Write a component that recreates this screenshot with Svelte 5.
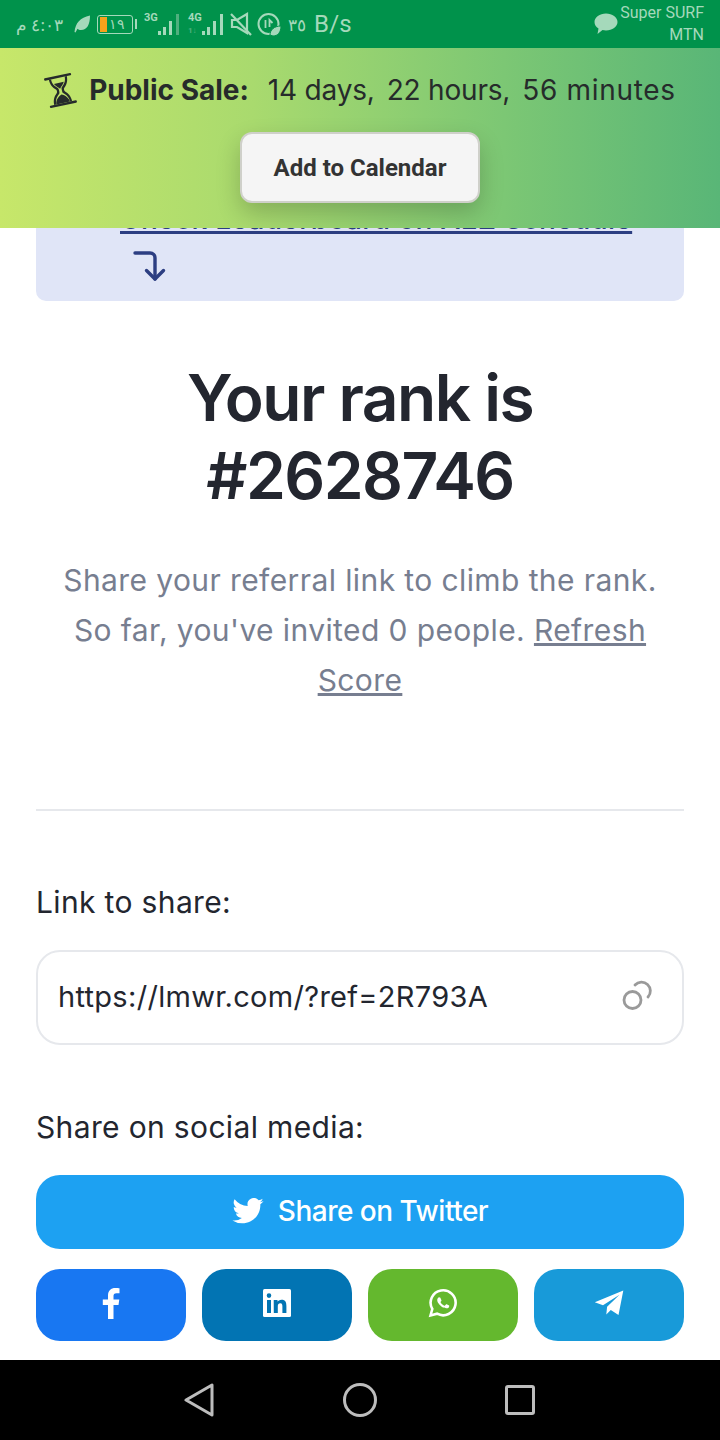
<script>
  const counters = ["14 days,", "22 hours,", "56 minutes"];
</script>

<div class="phone">
  <header class="status">
    <div class="status-left">
      <span class="clock">٤:٠٣ م</span>
      <svg class="leaf" width="16" height="18" viewBox="0 0 16 18"><path d="M0.500 17C1.500 8 6 2.500 16 .5c0 9-3 14.500-9 14.500-1.500 0-2.700-.4-3.500-1.200L1.500 17.500z" fill="#a5d9bb"/></svg>
      <div class="battery">
        <div class="battery-body"><span class="battery-fill"></span><span class="battery-num">١٩</span></div>
        <span class="battery-tip"></span>
      </div>
      <div class="signal sig3g">
        <span class="net">3G</span>
        <svg width="23" height="22" viewBox="0 0 23 22"><g fill="#a5d9bb"><rect x="1" y="18" width="3" height="4"/><rect x="6" y="14" width="3" height="8"/><rect x="12" y="8" width="3" height="14"/></g><rect x="19" y="1" width="3" height="21" fill="#4fb07e"/></svg>
      </div>
      <div class="signal sig4g">
        <span class="net">4G<small>1↓</small></span>
        <svg width="23" height="22" viewBox="0 0 23 22"><g fill="#a5d9bb"><rect x="1" y="18" width="3" height="4"/><rect x="6" y="14" width="3" height="8"/><rect x="12" y="8" width="3" height="14"/><rect x="19" y="1" width="3" height="21"/></g></svg>
      </div>
      <svg class="mute" width="24" height="24" viewBox="0 0 24 24" fill="none" stroke="#a5d9bb" stroke-width="2.200"><path d="M3 8h5l10-6v19l-10-6H3z"/><path d="M2 2l20 21"/></svg>
      <svg class="data" width="24" height="24" viewBox="0 0 24 24" fill="none"><circle cx="11.500" cy="12" r="10" stroke="#a5d9bb" stroke-width="2"/><path d="M8.500 8v8M12.500 15V8l3 3" stroke="#a5d9bb" stroke-width="1.800"/><path d="M13 23c0-5 4-9 11-9 0 6-3 10-8 10z" fill="#a5d9bb" stroke="#00924b" stroke-width="1"/></svg>
      <span class="speed-num">٣٥</span>
      <span class="speed">B/s</span>
    </div>
    <div class="status-right">
      <svg class="bubble" width="24" height="22" viewBox="0 0 24 22"><path d="M12 .5c6.300 0 11.500 3.700 11.500 8.500S18.300 17.500 12 17.500c-1.200 0-2.400-.1-3.500-.4L3.500 21l1-5.400C2 14 .5 11.700.5 9 .5 4.200 5.700.5 12 .5z" fill="#a5d9bb"/></svg>
      <div class="carrier"><span>Super SURF</span><span>MTN</span></div>
    </div>
  </header>

  <section class="banner">
    <div class="countdown">
      <svg class="hourglass" width="33" height="35" viewBox="0 0 36 38">
        <g transform="rotate(-12 18 19)" fill="#262b2b">
          <rect x="3" y="2.500" width="30" height="2.600" rx="1"/>
          <rect x="3" y="32.900" width="30" height="2.600" rx="1"/>
          <path d="M8 5h2.400c0 5 2 7.600 5 10.300.9.800 1.100 1.300 1.100 3.700s-.2 2.900-1.100 3.700c-3 2.700-5 5.300-5 10.300H8c0-6 2.400-9.300 5.300-12 .6-.6.700-1 .7-2s-.1-1.400-.7-2C10.400 14.300 8 11 8 5zM28 5h-2.400c0 5-2 7.600-5 10.300-.9.800-1.100 1.300-1.100 3.700s.2 2.900 1.100 3.700c3 2.700 5 5.300 5 10.300H28c0-6-2.400-9.300-5.300-12-.6-.6-.7-1-.7-2s.1-1.400.7-2C25.600 14.300 28 11 28 5z"/>
          <path d="M12.500 10.500h11C22 13.500 19.500 15 18 17c-1.500-2-4-3.500-5.500-6.500zM10.500 33c0-4 3.500-8 7.500-9.500 4 1.500 7.500 5.500 7.500 9.500z"/>
        </g>
      </svg>
      <strong>Public Sale:</strong>
      {#each counters as c}
        <span>{c}</span>
      {/each}
    </div>
    <button class="calendar">Add to Calendar</button>
  </section>

  <main class="page">
    <div class="notice">
      <a href="#leaderboard" class="notice-link">Check Leaderboard on AEZ Schedule</a>
      <svg class="notice-arrow" width="36" height="36" viewBox="0 0 36 36" fill="none" stroke="#2c3e82" stroke-width="3.400" stroke-linecap="round" stroke-linejoin="round"><path d="M3 3h15c3 0 5 2 5 5v21"/><path d="M14.500 20.500l8.500 8.500 8.500-8.500"/></svg>
    </div>

    <h1>Your rank is<br>#2628746</h1>
    <p class="sub">Share your referral link to climb the rank. So far, you've invited 0 people. <a href="#refresh">Refresh Score</a></p>

    <hr />

    <div class="label first">Link to share:</div>
    <div class="link-box">
      <span>https://lmwr.com/?ref=2R793A</span>
      <svg width="34" height="34" viewBox="0 0 34 34" fill="none" stroke="#9a9a9a" stroke-width="2.800"><circle cx="13.500" cy="20" r="8.500"/><path d="M16 5a8.500 8.500 0 1 1 13 12" stroke-linecap="round"/></svg>
    </div>

    <div class="label">Share on social media:</div>
    <a class="btn twitter" href="#twitter">
      <svg width="32" height="26" viewBox="0 0 24 20"><path fill="#fff" d="M24 2.400a9.800 9.800 0 0 1-2.800.8A4.900 4.900 0 0 0 23.300.5a9.800 9.800 0 0 1-3.100 1.200 4.900 4.900 0 0 0-8.400 4.500A14 14 0 0 1 1.700.9a4.900 4.900 0 0 0 1.500 6.600 4.900 4.900 0 0 1-2.200-.6v.1a4.900 4.900 0 0 0 3.900 4.800 4.900 4.900 0 0 1-2.200.1 4.900 4.900 0 0 0 4.600 3.400A9.900 9.900 0 0 1 0 17.300a14 14 0 0 0 7.500 2.200c9.100 0 14-7.500 14-14v-.6A10 10 0 0 0 24 2.400z"/></svg>
      Share on Twitter
    </a>
    <div class="socials">
      <a class="btn fb" href="#facebook" aria-label="Facebook">
        <svg width="18" height="32" viewBox="0 0 18 32"><path fill="#fff" d="M11.500 32V18h5l.8-5.600h-5.800V9c0-1.700.7-2.800 3-2.800h3V1.300C16.900 1.200 15.200 1 13.300 1 9 1 6 3.600 6 8.400v4H.8V18H6v14z"/></svg>
      </a>
      <a class="btn li" href="#linkedin" aria-label="LinkedIn">
        <svg width="28" height="28" viewBox="0 0 28 28"><rect width="28" height="28" rx="1.500" fill="#fff"/><path fill="#0274b3" d="M4 11h4v13H4zM6 4.300a2.300 2.300 0 1 1 0 4.600 2.300 2.300 0 0 1 0-4.600zM10.700 11h3.800v1.800c.6-1.100 2-2.100 4-2.100 4.100 0 4.900 2.700 4.900 6.200V24h-4v-6.300c0-1.500 0-3.400-2.100-3.400s-2.500 1.600-2.500 3.300V24h-4z"/></svg>
      </a>
      <a class="btn wa" href="#whatsapp" aria-label="WhatsApp">
        <svg width="30" height="30" viewBox="0 0 30 30"><path fill="none" stroke="#fff" stroke-width="2.600" d="M2.500 27.500l1.800-6.500a12.500 12.500 0 1 1 4.800 4.700z"/><path fill="#fff" d="M10.800 8.300c-.3 0-.8.100-1.200.6-.5.500-1.500 1.400-1.500 3.400s1.500 4 1.700 4.200c.2.300 2.900 4.500 7 6.100 3.500 1.300 4.200 1 5 1 .7-.1 2.400-1 2.700-1.900.3-.9.300-1.700.2-1.900-.1-.2-.3-.3-.7-.5l-2.800-1.300c-.4-.1-.7-.2-1 .2-.3.400-1 1.300-1.300 1.600-.2.300-.5.300-.9.100-.4-.2-1.700-.6-3.100-1.900-1.200-1-2-2.300-2.200-2.700-.2-.4 0-.6.200-.8l.6-.7c.2-.2.300-.4.400-.6.100-.3.100-.5 0-.7l-1.300-3.100c-.3-.8-.7-.8-1-.8z" transform="translate(3.400 3.300) scale(.72)"/></svg>
      </a>
      <a class="btn tg" href="#telegram" aria-label="Telegram">
        <svg width="30" height="26" viewBox="0 0 30 26"><path fill="#fff" d="M29.300.5L24.500 25 16.800 20l-4.500 4.600.8-7.800L25.500 4.700 9 15.300.8 12.200z"/></svg>
      </a>
    </div>
  </main>

  <nav class="navbar">
    <svg width="32" height="36" viewBox="0 0 32 36" fill="none" stroke="#bdbdbd" stroke-width="3" stroke-linejoin="round"><path d="M28 3v30L2 18z"/></svg>
    <svg width="36" height="36" viewBox="0 0 36 36" fill="none" stroke="#bdbdbd" stroke-width="3"><circle cx="18" cy="18" r="15.500"/></svg>
    <svg width="30" height="30" viewBox="0 0 30 30" fill="none" stroke="#bdbdbd" stroke-width="3" stroke-linejoin="round"><rect x="1.500" y="1.500" width="27" height="27" rx="1.500"/></svg>
  </nav>
</div>

<style>
  :global(body) {
    margin: 0;
    background: #fff;
  }

  .phone {
    width: 720px;
    height: 1440px;
    display: flex;
    flex-direction: column;
    overflow: hidden;
    font-family: Inter, "Liberation Sans", sans-serif;
    color: #23262f;
  }

  .status {
    height: 48px;
    flex: none;
    background: #00924b;
    display: flex;
    justify-content: space-between;
    align-items: center;
    color: #a5d9bb;
    font-family: Roboto, sans-serif;
    padding: 0 16px 0 17px;
    box-sizing: border-box;
  }
  .status-left {
    display: flex;
    align-items: center;
  }
  .clock {
    width: 46px;
    font-size: 17px;
    font-family: "Noto Sans", sans-serif;
    letter-spacing: 1px;
    direction: rtl;
    white-space: nowrap;
  }
  .leaf {
    margin-left: 11px;
  }
  .battery {
    margin-left: 7px;
    display: flex;
    align-items: center;
    gap: 2px;
  }
  .battery-body {
    width: 36px;
    height: 19px;
    box-sizing: border-box;
    border: 1.500px solid #a5d9bb;
    border-radius: 3px;
    display: flex;
    align-items: center;
    padding: 1px 1px 1px 2px;
    gap: 2px;
  }
  .battery-fill {
    width: 7px;
    height: 100%;
    background: #f7a21b;
  }
  .battery-num {
    font-size: 14px;
    font-family: "Noto Sans", sans-serif;
    line-height: 1;
  }
  .battery-tip {
    width: 2px;
    height: 10px;
    background: #a5d9bb;
  }
  .signal {
    display: flex;
    height: 22px;
  }
  .sig3g {
    margin-left: 7px;
  }
  .sig4g {
    margin-left: 8px;
  }
  .net {
    width: 13px;
    font-size: 11px;
    font-weight: 700;
    line-height: 10px;
    display: flex;
    flex-direction: column;
    white-space: nowrap;
  }
  .net small {
    margin-top: 4px;
    font-size: 8px;
    line-height: 8px;
    color: #4fb07e;
  }
  .mute {
    margin-left: 5px;
  }
  .data {
    margin-left: 4px;
  }
  .speed-num {
    margin-left: 7px;
    font-size: 17px;
    font-family: "Noto Sans", sans-serif;
  }
  .speed {
    margin-left: 8px;
    font-size: 24px;
    letter-spacing: 0.200px;
  }
  .status-right {
    display: flex;
    align-items: center;
    gap: 2px;
  }
  .carrier {
    display: flex;
    flex-direction: column;
    align-items: flex-end;
    font-size: 16px;
    line-height: 22px;
  }

  .banner {
    height: 180px;
    flex: none;
    box-sizing: border-box;
    background: linear-gradient(90deg, #c7e76a 0%, #a9da6e 35%, #7cc774 70%, #59b677 100%);
    display: flex;
    flex-direction: column;
    align-items: center;
    padding-top: 22px;
    position: relative;
    z-index: 2;
  }
  .countdown {
    display: flex;
    align-items: center;
    font-size: 28px;
    line-height: 40px;
    letter-spacing: -0.200px;
    color: #262b2b;
    gap: 12px;
    font-weight: 400;
  }
  .countdown strong {
    font-weight: 700;
    letter-spacing: 0;
    margin-right: 7px;
  }
  .countdown span:last-child {
    letter-spacing: 0.700px;
  }
  .calendar {
    margin-top: 22px;
    width: 240px;
    height: 71px;
    background: #f5f5f5;
    border: 2px solid #cfd0ca;
    border-radius: 12px;
    font-family: Roboto, sans-serif;
    font-weight: 700;
    font-size: 24px;
    color: #333;
    box-shadow: 0 10px 25px rgba(0, 0, 0, 0.2);
  }

  .page {
    flex: 1;
    min-height: 0;
    overflow: hidden;
    padding: 0 36px;
  }
  .notice {
    height: 73px;
    background: #e0e5f7;
    border-radius: 0 0 10px 10px;
    padding-left: 84px;
    overflow: hidden;
  }
  .notice-link {
    display: block;
    width: max-content;
    margin-top: -29px;
    font-size: 28px;
    line-height: 40px;
    letter-spacing: 0.350px;
    color: #2c3e82;
    font-weight: 500;
    text-decoration: underline;
    text-decoration-thickness: 3px;
    text-underline-offset: 2px;
  }
  .notice-arrow {
    display: block;
    margin: 11px 0 0 12px;
  }

  h1 {
    margin: 58px 0 0;
    text-align: center;
    font-size: 64px;
    line-height: 78px;
    font-weight: 600;
    letter-spacing: -1.500px;
    color: #23262f;
  }
  .sub {
    margin: 40px auto 0;
    max-width: 610px;
    text-align: center;
    font-size: 30px;
    line-height: 50px;
    letter-spacing: 0.400px;
    color: #777e90;
  }
  .sub a {
    color: #777e90;
    text-decoration: underline;
  }
  hr {
    margin: 104px 0 0;
    border: none;
    border-top: 2px solid #e6e8ec;
  }
  .label {
    font-size: 30px;
    line-height: 40px;
    letter-spacing: 0.350px;
    margin-top: 62px;
    color: #23262f;
  }
  .label.first {
    margin-top: 71px;
  }
  .link-box {
    margin-top: 28px;
    height: 95px;
    box-sizing: border-box;
    border: 2px solid #e6e8ec;
    border-radius: 24px;
    display: flex;
    align-items: center;
    justify-content: space-between;
    padding: 0 29px 2px 20px;
    font-size: 29px;
    letter-spacing: 0.300px;
    color: #23262f;
  }
  .btn {
    display: flex;
    align-items: center;
    justify-content: center;
    box-sizing: border-box;
    text-decoration: none;
    color: #fff;
    border-radius: 24px;
  }
  .twitter {
    margin-top: 28px;
    height: 74px;
    padding-bottom: 3px;
    background: #1da1f2;
    font-size: 28px;
    gap: 14px;
    font-weight: 500;
    letter-spacing: -0.500px;
  }
  .socials {
    margin-top: 20px;
    display: grid;
    grid-template-columns: repeat(4, 1fr);
    gap: 16px;
  }
  .socials .btn {
    height: 72px;
    padding-bottom: 4px;
  }
  .fb { background: #1877f2; }
  .li { background: #0274b3; }
  .wa { background: #64b82e; }
  .tg { background: #189ad9; }

  .navbar {
    height: 80px;
    flex: none;
    background: #000;
    display: grid;
    grid-template-columns: repeat(3, 160px);
    justify-content: center;
    justify-items: center;
    align-items: center;
  }
</style>
